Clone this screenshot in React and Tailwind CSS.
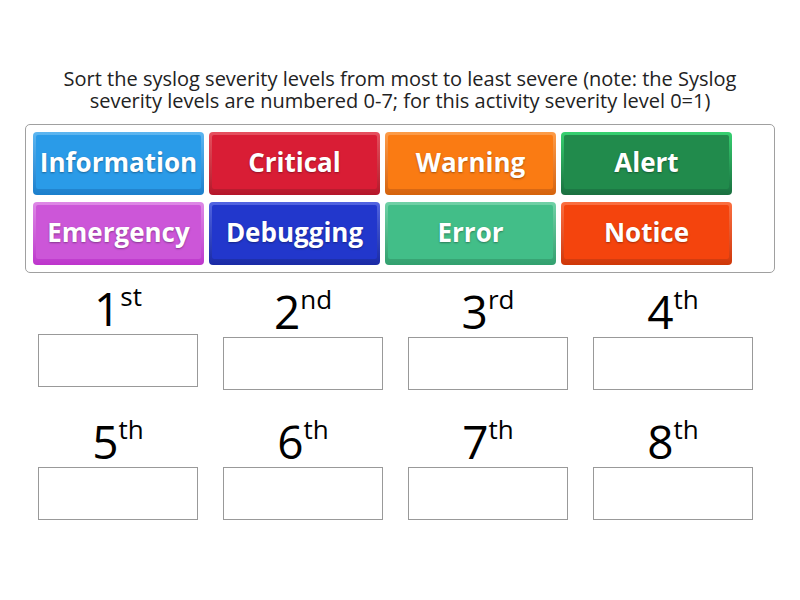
import React from 'react';

const tiles = [
  { label: 'Information', face: 'bg-[#2a9be8]', edge: 'from-[#5cb6f1] to-[#1a7fcc]' },
  { label: 'Critical', face: 'bg-[#d91d35]', edge: 'from-[#e6505f] to-[#b5152a]' },
  { label: 'Warning', face: 'bg-[#fa7b13]', edge: 'from-[#fd9c48] to-[#d5630a]' },
  { label: 'Alert', face: 'bg-[#218b4c]', edge: 'from-[#36d070] to-[#1a7040]' },
  { label: 'Emergency', face: 'bg-[#cc56d8]', edge: 'from-[#de88e6] to-[#bd34cc]' },
  { label: 'Debugging', face: 'bg-[#2237cc]', edge: 'from-[#5264e2] to-[#1a2aa6]' },
  { label: 'Error', face: 'bg-[#42be88]', edge: 'from-[#70d1a6] to-[#32a06f]' },
  { label: 'Notice', face: 'bg-[#f4440d]', edge: 'from-[#fb6f40] to-[#cf3707]' },
];

const slots = [
  ['1', 'st'], ['2', 'nd'], ['3', 'rd'], ['4', 'th'],
  ['5', 'th'], ['6', 'th'], ['7', 'th'], ['8', 'th'],
];

function Tile({ label, face, edge }) {
  return (
    <div className={`h-[63px] rounded-[4px] bg-gradient-to-b ${edge} pt-[3px] px-[3px] pb-[6px]`}>
      <div className={`h-full rounded-[2px] ${face} flex items-center justify-center text-white font-bold text-[26px] [text-shadow:0_1px_2px_rgba(0,0,0,0.35)]`}>
        {label}
      </div>
    </div>
  );
}

function Slot({ num, suffix, raised }) {
  return (
    <div className={`flex flex-col items-center ${raised ? '-mt-[3px] mb-[3px]' : ''}`}>
      <div className="text-[46px] leading-[46px] text-black">
        {num}
        <span className="relative bottom-[20px] text-[26px] leading-none">{suffix}</span>
      </div>
      <div className="mt-[3px] w-[160px] h-[53px] border border-[#999] bg-white" />
    </div>
  );
}

export default function App() {
  return (
    <div className="w-[800px] h-[600px] bg-white font-['Open_Sans',sans-serif] text-[#222]">
      <div className="pt-[68px] text-center text-[20px] leading-[22px] px-[30px]">
        Sort the syslog severity levels from most to least severe (note: the Syslog severity levels are numbered 0-7; for this activity severity level 0=1)
      </div>
      <div className="mt-[12px] ml-[25px] w-[750px] border border-[#a0a0a0] rounded-[5px] p-[7px] pr-[42px]">
        <div className="grid grid-cols-4 gap-x-[5px] gap-y-[7px]">
          {tiles.map((t) => (
            <Tile key={t.label} {...t} />
          ))}
        </div>
      </div>
      <div className="ml-[38px] mt-[15px] grid grid-cols-[repeat(4,160px)] gap-x-[25px] gap-y-[28px]">
        {slots.map(([n, s], i) => (
          <Slot key={n} num={n} suffix={s} raised={i === 0} />
        ))}
      </div>
    </div>
  );
}
